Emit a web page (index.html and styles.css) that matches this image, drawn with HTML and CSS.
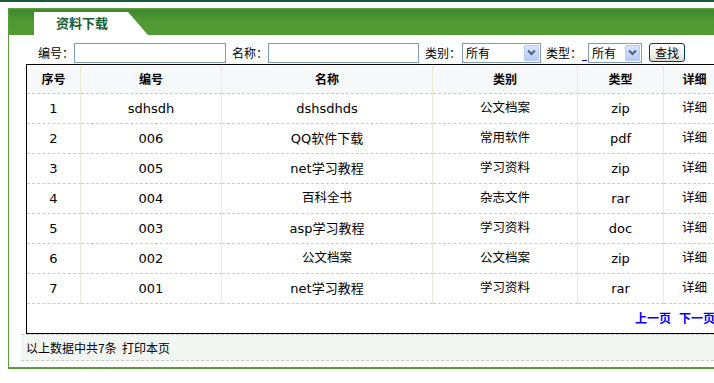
FILE: index.html
```html
<!DOCTYPE html>
<html lang="zh-CN">
<head>
    <meta charset="UTF-8">
    <title>资料下载</title>
    <link rel="stylesheet" href="styles.css">
</head>
<body>
    <div class="topline"></div>
    <div class="panel">
        <div class="panel-head">
            <div class="tab">资料下载</div>
        </div>
        <div class="panel-body">
            <div class="search">
                <label class="lbl first">编号：</label>
                <input type="text" class="txt wide1">
                <label class="lbl">名称：</label>
                <input type="text" class="txt wide2">
                <label class="lbl">类别：</label>
                <span class="sel sel1">所有<span class="arrow"><svg width="9" height="7" viewBox="0 0 9 7"><path d="M1 1.5 L4.5 5 L8 1.5" fill="none" stroke="#4d6185" stroke-width="2"/></svg></span></span>
                <label class="lbl lbl-type">类型：</label>
                <a class="blank-link">&nbsp;</a>
                <span class="sel sel2">所有<span class="arrow"><svg width="9" height="7" viewBox="0 0 9 7"><path d="M1 1.5 L4.5 5 L8 1.5" fill="none" stroke="#4d6185" stroke-width="2"/></svg></span></span>
                <button class="btn">查找</button>
            </div>

            <table class="list">
                <colgroup>
                    <col style="width:54px">
                    <col style="width:141px">
                    <col style="width:211px">
                    <col style="width:145px">
                    <col style="width:86px">
                    <col style="width:61px">
                </colgroup>
                <thead>
                    <tr>
                        <th>序号</th>
                        <th>编号</th>
                        <th>名称</th>
                        <th>类别</th>
                        <th>类型</th>
                        <th class="last">详细</th>
                    </tr>
                </thead>
                <tbody>
                    <tr><td>1</td><td>sdhsdh</td><td>dshsdhds</td><td class="cn">公文档案</td><td>zip</td><td class="last cn">详细</td></tr>
                    <tr><td>2</td><td>006</td><td>QQ软件下载</td><td class="cn">常用软件</td><td>pdf</td><td class="last cn">详细</td></tr>
                    <tr><td>3</td><td>005</td><td>net学习教程</td><td class="cn">学习资料</td><td>zip</td><td class="last cn">详细</td></tr>
                    <tr><td>4</td><td>004</td><td class="cn">百科全书</td><td class="cn">杂志文件</td><td>rar</td><td class="last cn">详细</td></tr>
                    <tr><td>5</td><td>003</td><td>asp学习教程</td><td class="cn">学习资料</td><td>doc</td><td class="last cn">详细</td></tr>
                    <tr><td>6</td><td>002</td><td class="cn">公文档案</td><td class="cn">公文档案</td><td>zip</td><td class="last cn">详细</td></tr>
                    <tr><td>7</td><td>001</td><td>net学习教程</td><td class="cn">学习资料</td><td>rar</td><td class="last cn">详细</td></tr>
                    <tr class="pager"><td colspan="6"><a href="#">上一页</a><a href="#">下一页</a></td></tr>
                </tbody>
            </table>

            <div class="summary">以上数据中共7条&nbsp; 打印本页</div>
        </div>
    </div>
</body>
</html>
```

FILE: styles.css
```css
html, body {
    overflow: hidden;
}

body {
    margin: 0;
    background: #fff;
    font-family: "DejaVu Sans", "Noto Sans CJK SC", sans-serif;
    font-size: 12px;
    line-height: 16px;
    color: #000;
}

.topline {
    height: 2px;
    background: #1c5a37;
}

.panel {
    margin: 6px 0 0 8px;
    width: 740px;
    border-left: 1px solid #5a9e3a;
    border-bottom: 2px solid #5a9e3a;
}

.panel-head {
    height: 23px;
    padding: 4px 0 0 25px;
    background: linear-gradient(#66aa48 0, #3d892c 2px, #468f31 7px, #4f9834 11px, #529b35 100%);
}

.tab {
    width: 114px;
    height: 23px;
    background: #fff;
    clip-path: polygon(0 0, 94px 0, 114px 23px, 0 23px);
    box-sizing: border-box;
    padding-left: 22px;
    line-height: 22px;
    font-family: "Noto Sans CJK SC", sans-serif;
    font-size: 13px;
    font-weight: bold;
    color: #1b5c33;
}

.panel-body {
    padding: 7px 0 6px 0;
}

/* search bar */
.search {
    display: flex;
    align-items: center;
    height: 21px;
    margin-left: 29px;
}

.lbl {
    font-family: "Noto Sans CJK SC", sans-serif;
    font-size: 12px;
    width: 36px;
    margin-left: 6px;
    white-space: nowrap;
}

.lbl.first {
    margin-left: 0;
}

.lbl-type {
    margin-left: 5px;
}

.txt {
    height: 20px;
    box-sizing: border-box;
    border: 1px solid #7f9db9;
    margin: 0;
    padding: 0 2px;
}

.wide1 { width: 152px; }
.wide2 { width: 151px; }

.blank-link {
    display: inline-block;
    width: 5px;
    height: 14px;
    border-bottom: 1px solid #0000ff;
    margin: 2px 1px 0 0;
}

.sel {
    position: relative;
    display: inline-block;
    height: 20px;
    box-sizing: border-box;
    border: 1px solid #7f9db9;
    padding-left: 3px;
    line-height: 18px;
    font-family: "Noto Sans CJK SC", sans-serif;
    font-size: 12px;
    background: #fff;
}

.sel1 { width: 79px; margin-left: 1px; }
.sel2 { width: 54px; }

.arrow {
    position: absolute;
    right: 1px;
    top: 1px;
    width: 15px;
    height: 16px;
    box-sizing: border-box;
    border: 1px solid #b8cbf3;
    border-radius: 1px;
    background: linear-gradient(#dbe6fd, #b7cbf7);
    display: flex;
    align-items: center;
    justify-content: center;
}

.btn {
    margin-left: 7px;
    width: 36px;
    height: 19px;
    padding: 0;
    border: 1px solid #003c74;
    border-radius: 3px;
    background: linear-gradient(#ffffff, #f2f1ea 60%, #dcd9cc);
    font-family: "Noto Sans CJK SC", sans-serif;
    font-size: 12px;
    line-height: 16px;
    color: #000;
}

/* list table */
.list {
    margin: 1px 0 0 17px;
    border: 1px solid #000;
    border-spacing: 0;
    table-layout: fixed;
    width: 700px;
}

.list th,
.list td {
    padding: 0;
    text-align: center;
    line-height: 16px;
    border-right: 1px solid #ebe8d6;
    border-bottom: 1px dashed #cccccc;
    white-space: nowrap;
    overflow: hidden;
}

.list th {
    height: 28px;
    background: #f7f8fa;
    font-family: "Noto Sans CJK SC", sans-serif;
    font-size: 12px;
    font-weight: bold;
}

.list td {
    height: 29px;
    font-size: 13px;
}

.list td.cn {
    font-family: "Noto Sans CJK SC", sans-serif;
    font-size: 12.5px;
    vertical-align: top;
    padding-top: 5px;
    height: 24px;
}

.list .last {
    border-right: none;
}

.list .pager td {
    border: none;
    text-align: right;
    padding-right: 10px;
    height: 29px;
}

.pager a {
    font-family: "Noto Sans CJK SC", sans-serif;
    font-size: 12px;
    font-weight: bold;
    color: #0000ff;
    text-decoration: none;
    margin-left: 8px;
}

.summary {
    margin-left: 12px;
    height: 25px;
    line-height: 25px;
    padding-left: 5px;
    border-top: 1px dashed #cccccc;
    border-bottom: 1px dashed #cccccc;
    background: #f1f6f3;
    font-family: "Noto Sans CJK SC", sans-serif;
    font-size: 12px;
}
```
